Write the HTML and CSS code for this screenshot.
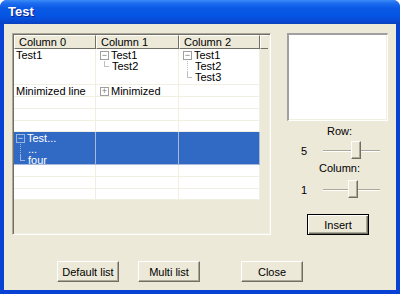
FILE: index.html
```html
<!DOCTYPE html>
<html lang="en">
<head>
    <meta charset="UTF-8">
    <title>Test</title>
    <link rel="stylesheet" href="styles.css">
</head>
<body>
    <div class="window">
        <div class="titlebar">Test</div>
        <div class="client">
            <div class="main">
                <div class="grid">
                    <div class="header">
                        <div class="hcell c0">Column 0</div>
                        <div class="hcell c1">Column 1</div>
                        <div class="hcell c2">Column 2</div>
                        <div class="hcell rest"></div>
                    </div>
                    <div class="row tall">
                        <div class="cell c0">Test1</div>
                        <div class="cell c1">
                            <div class="node"><span class="box">&minus;</span>Test1</div>
                            <div class="kids"><div class="leaf last">Test2</div></div>
                        </div>
                        <div class="cell c2">
                            <div class="node"><span class="box">&minus;</span>Test1</div>
                            <div class="kids">
                                <div class="leaf">Test2</div>
                                <div class="leaf last">Test3</div>
                            </div>
                        </div>
                    </div>
                    <div class="row">
                        <div class="cell c0">Minimized line</div>
                        <div class="cell c1"><div class="node"><span class="box">+</span>Minimized</div></div>
                        <div class="cell c2"></div>
                    </div>
                    <div class="row"><div class="cell c0"></div><div class="cell c1"></div><div class="cell c2"></div></div>
                    <div class="row"><div class="cell c0"></div><div class="cell c1"></div><div class="cell c2"></div></div>
                    <div class="row short"><div class="cell c0"></div><div class="cell c1"></div><div class="cell c2"></div></div>
                    <div class="row sel">
                        <div class="cell c0">
                            <div class="node"><span class="box">&minus;</span>Test...</div>
                            <div class="kids">
                                <div class="leaf">...</div>
                                <div class="leaf last">four</div>
                            </div>
                        </div>
                        <div class="cell c1"></div>
                        <div class="cell c2"></div>
                    </div>
                    <div class="row"><div class="cell c0"></div><div class="cell c1"></div><div class="cell c2"></div></div>
                    <div class="row"><div class="cell c0"></div><div class="cell c1"></div><div class="cell c2"></div></div>
                    <div class="row short"><div class="cell c0"></div><div class="cell c1"></div><div class="cell c2"></div></div>
                </div>

                <div class="side">
                    <div class="preview"></div>
                    <div class="label label-row">Row:</div>
                    <div class="slider-row first">
                        <span class="value">5</span>
                        <div class="track"><span class="thumb thumb-row"></span></div>
                    </div>
                    <div class="label">Column:</div>
                    <div class="slider-row second">
                        <span class="value">1</span>
                        <div class="track"><span class="thumb thumb-col"></span></div>
                    </div>
                    <button class="btn default insert">Insert</button>
                </div>
            </div>

            <div class="footer">
                <button class="btn">Default list</button>
                <button class="btn">Multi list</button>
                <button class="btn close">Close</button>
            </div>
        </div>
    </div>
</body>
</html>
```

FILE: styles.css
```css
body {
    margin: 0;
    background: #fff;
    font-family: "Liberation Sans", Arial, sans-serif;
    font-size: 11px;
    color: #000;
}
.window {
    width: 400px;
    height: 294px;
    display: flex;
    flex-direction: column;
    background: #0842d4;
    border-radius: 7px 7px 0 0;
    overflow: hidden;
}
.titlebar {
    height: 24px;
    line-height: 24px;
    padding-left: 8px;
    color: #fff;
    font-weight: bold;
    font-size: 13px;
    text-shadow: 1px 1px #0a1e8c;
    background: linear-gradient(#3c8cf8 0, #1f6ef0 3px, #0a5ae6 8px, #0555e4 16px, #0847d0 22px, #0a3fb8 24px);
}
.client {
    flex: 1;
    margin: 0 4px 4px;
    background: #ece9d8;
    padding: 9px 8px 0;
    display: flex;
    flex-direction: column;
}
.main {
    display: flex;
}
.grid {
    width: 257px;
    height: 198px;
    border-top: 1px solid #aca899;
    border-left: 1px solid #aca899;
    border-right: 1px solid #fff;
    border-bottom: 1px solid #fff;
    box-shadow: inset 1px 1px #716f64, inset -1px -1px #f1efe2;
    padding: 1px 2px 1px 1px;
    background: #ece9d8;
}
.header {
    display: flex;
    height: 14px;
    line-height: 13px;
}
.hcell {
    box-sizing: border-box;
    height: 14px;
    padding-left: 4px;
    background: #ece9d8;
    border-top: 1px solid #fff;
    border-left: 1px solid #fff;
    border-right: 1px solid #716f64;
    border-bottom: 1px solid #716f64;
}
.c0 { width: 82px; }
.c1 { width: 83px; }
.c2 { width: 81px; }
.hcell.rest { flex: 1; border-right: none; }
.row {
    display: flex;
    height: 12px;
}
.row.tall { height: 36px; }
.row.short { height: 11px; }
.row.sel { height: 33px; }
.cell {
    box-sizing: border-box;
    background: #fff;
    border-right: 1px solid #f1efe2;
    border-bottom: 1px solid #f1efe2;
    padding: 1px 0 0 2px;
    line-height: 11px;
    white-space: nowrap;
    overflow: hidden;
}
.cell.c1, .cell.c2 { padding-left: 4px; }
.row.sel .cell {
    background: #316ac5;
    color: #fff;
    border-color: #a8b8d8;
}
.node {
    display: flex;
    align-items: center;
    height: 11px;
}
.box {
    box-sizing: border-box;
    width: 9px;
    height: 9px;
    border: 1px solid #a0a0a0;
    margin-right: 2px;
    font-size: 9px;
    line-height: 6px;
    text-align: center;
    color: #777;
    background: #fff;
}
.row.sel .box {
    background: #316ac5;
    border-color: #9cb4e0;
    color: #dde6f6;
}
.kids {
    margin-left: 4px;
}
.leaf {
    height: 11px;
    padding-left: 7px;
    border-left: 1px dotted #c0c0c0;
}
.leaf.last {
    border-left: none;
    padding-left: 8px;
    background: linear-gradient(#c0c0c0, #c0c0c0) 0 0 / 1px 6px no-repeat,
                linear-gradient(#c0c0c0, #c0c0c0) 0 5px / 5px 1px no-repeat;
}
.row.sel .leaf { border-left-color: #9cb4e0; }
.row.sel .leaf.last {
    background: linear-gradient(#9cb4e0, #9cb4e0) 0 0 / 1px 6px no-repeat,
                linear-gradient(#9cb4e0, #9cb4e0) 0 5px / 5px 1px no-repeat;
}
.side {
    width: 101px;
    margin-left: 16px;
    display: flex;
    flex-direction: column;
}
.preview {
    box-sizing: border-box;
    width: 101px;
    height: 88px;
    background: #fff;
    border-top: 2px solid #a0a0a0;
    border-left: 2px solid #a0a0a0;
    border-right: 1px solid #fff;
    border-bottom: 1px solid #fff;
    box-shadow: inset -1px -1px #f1efe2;
}
.label {
    height: 12px;
    line-height: 12px;
    text-align: center;
    padding-left: 4px;
}
.label-row { margin-top: 4px; }
.slider-row {
    display: flex;
    align-items: center;
    height: 22px;
    padding-left: 14px;
}
.slider-row.first { margin-top: 3px; }
.slider-row.second { margin-top: 5px; }
.value {
    width: 22px;
}
.track {
    position: relative;
    width: 57px;
    height: 1px;
    background: #aca899;
    border-bottom: 1px solid #fff;
}
.thumb {
    position: absolute;
    top: -9px;
    box-sizing: border-box;
    width: 10px;
    height: 18px;
    background: #ece9d8;
    border-top: 1px solid #fff;
    border-left: 1px solid #fff;
    border-right: 1px solid #716f64;
    border-bottom: 1px solid #716f64;
    box-shadow: inset -1px -1px #aca899;
}
.thumb-row { left: 28px; }
.thumb-col { left: 25px; }
.btn {
    box-sizing: border-box;
    width: 62px;
    height: 21px;
    padding: 0;
    font-family: "Liberation Sans", Arial, sans-serif;
    font-size: 11px;
    color: #000;
    background: #ece9d8;
    border-top: 1px solid #fff;
    border-left: 1px solid #fff;
    border-right: 1px solid #716f64;
    border-bottom: 1px solid #716f64;
    box-shadow: inset -1px -1px #aca899;
}
.btn.default {
    border: 1px solid #000;
    box-shadow: inset 1px 1px #fff, inset -1px -1px #716f64, inset -2px -2px #aca899;
}
.insert {
    margin-top: 13px;
    margin-left: 20px;
}
.footer {
    display: flex;
    margin-top: 26px;
    padding-left: 45px;
}
.footer .btn + .btn { margin-left: 19px; }
.footer .btn.close { margin-left: 41px; }
```
